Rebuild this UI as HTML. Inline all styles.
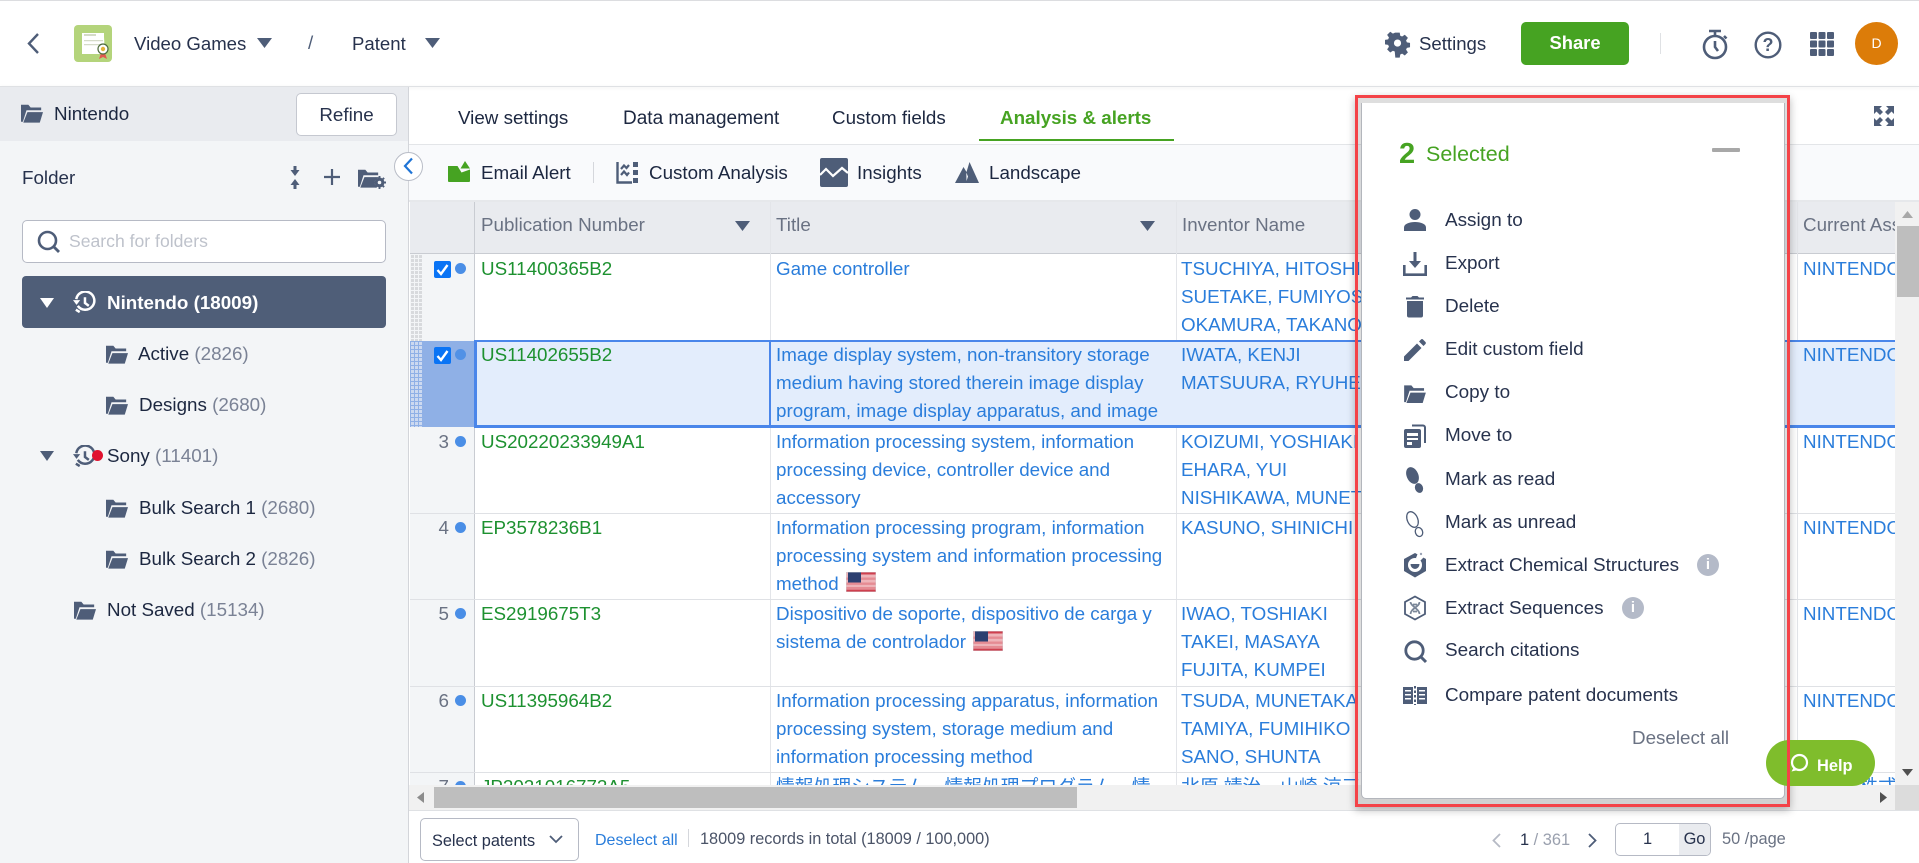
<!DOCTYPE html>
<html><head><meta charset="utf-8">
<style>
html,body{margin:0;padding:0;width:1919px;height:863px;overflow:hidden;background:#fff}
body{font-family:"Liberation Sans","Noto Sans CJK JP",sans-serif;color:#1c2740;font-size:18.8px;position:relative}
.a{position:absolute}
.t{position:absolute;white-space:nowrap;line-height:28px}
svg{position:absolute;overflow:visible}
.c{color:#7a8295}
.pub{color:#1d9130}
.lnk{color:#2a7ddb}
.num{color:#6a7283;width:20px;text-align:right;left:429px}
.dot{position:absolute;left:455px;width:11px;height:11px;border-radius:50%;background:#4a8ee6}
.cb{position:absolute;left:434px;width:17px;height:17px;border-radius:2px;background:#0a74f5}
.hl{position:absolute;height:1px;background:#dfe1e5;left:410px;width:1486px}
.vl{position:absolute;width:1px;top:253px;height:532px;background:#e3e5e9}
.grip{position:absolute;left:410px;width:12px;background:linear-gradient(var(--b) 1px,transparent 1px) 0 0/4px 4px,linear-gradient(90deg,var(--b) 1px,transparent 1px) 0 0/4px 4px,var(--d)}
.mi{position:absolute;left:1445px;white-space:nowrap;line-height:28px;color:#27324d;font-size:18.9px}
</style></head><body>
<svg width="0" height="0" style="position:absolute"><defs>
<symbol id="fo" viewBox="0 0 24 21"><path fill="#4e5d78" d="M0 1.5H8L10.5 4.5H22V7.5H6L2 20H0Z"/><path fill="#4e5d78" d="M7 9.5H24L20.5 21H2.5Z"/></symbol>
<symbol id="hi" viewBox="0 0 24 24"><path fill="none" stroke="currentColor" stroke-width="2.6" d="M5 15.5A9.5 9.5 0 1 0 3.4 8.5M12.5 6.5V12.5L16.5 15.5M3 19.5 7 22"/><path fill="currentColor" d="M0 9.5H7.5L3.7 14.5Z"/></symbol>
<symbol id="fl" viewBox="0 0 30 20"><rect width="30" height="20" fill="#eeb4b9"/><path fill="#e58b93" d="M0 5.500h30v2.400H0zM0 10.500h30v2.400H0zM0 15h30v2H0z"/><rect y="17.500" width="30" height="2.500" fill="#cf3f4e"/><rect x="14" y="0" width="16" height="2.500" fill="#cf3f4e"/><rect x="2" width="13" height="10.500" fill="#2c3f70"/><rect width="30" height="20" fill="none" stroke="#cfd1d6" stroke-width=".8"/></symbol>
</defs></svg>

<!-- top header -->
<div class="a" style="left:0;top:0;width:1919px;height:1px;background:#dcdde0"></div>
<div class="a" style="left:0;top:86px;width:1919px;height:1px;background:#dfe1e4;box-shadow:0 1px 3px rgba(0,0,0,.1)"></div>
<svg style="left:26px;top:32px" width="14" height="22"><path d="M12 2 3 11.5 12 21" fill="none" stroke="#4e5d78" stroke-width="2.4"/></svg>
<svg style="left:74px;top:25px" width="38" height="37" viewBox="0 0 38 37"><rect width="38" height="37" rx="4" fill="#b4d47b"/><path d="M8 8H30V12L31 29H8Z" fill="#fff"/><path d="M10 9H22V11H10ZM10 15H29V16.2H10ZM10 19H29V20.2H10Z" fill="#d5dbc8"/><path d="M25 34 27 28H31L33 34 29 32Z" fill="#e2584f"/><circle cx="29" cy="24" r="5" fill="#fff" stroke="#4d6b3c" stroke-width="1.2"/><circle cx="29" cy="24" r="2.2" fill="#e3b23b"/></svg>
<div class="t" style="left:134px;top:30px;font-size:18.6px;color:#27324d">Video Games</div>
<svg style="left:257px;top:38px" width="15" height="11"><path d="M0 0H15L7.500 10Z" fill="#4e5d78"/></svg>
<div class="t" style="left:308px;top:29px;color:#4e5d78">/</div>
<div class="t" style="left:352px;top:30px;font-size:18.6px;color:#27324d">Patent</div>
<svg style="left:425px;top:38px" width="15" height="11"><path d="M0 0H15L7.500 10Z" fill="#4e5d78"/></svg>

<svg style="left:1386px;top:32px" width="23" height="23" viewBox="0 0 24 24"><path fill="#4e5d78" fill-rule="evenodd" d="M9.6 0h4.8l.6 3.4 2 .9 2.900-2 3.400 3.400-2 2.900.9 2 3.400.6v4.800l-3.400.6-.9 2 2 2.900-3.400 3.400-2.900-2-2 .9-.6 3.400H9.600L9 20.600l-2-.9-2.900 2-3.400-3.400 2-2.900-.9-2L-1.600 12.800V8l3.400-.6.900-2-2-2.900 3.400-3.400 2.900 2 2-.9ZM12 7.500a3.900 3.900 0 1 0 0 7.800 3.900 3.900 0 0 0 0-7.800Z" transform="translate(0.500 0.600) scale(.96)"/></svg>
<div class="t" style="left:1419px;top:30px;font-size:18.6px;color:#27324d">Settings</div>
<div class="a" style="left:1521px;top:22px;width:108px;height:43px;border-radius:5px;background:#46a322;color:#fff;text-align:center;line-height:42px;font-size:18.4px;font-weight:bold">Share</div>
<div class="a" style="left:1660px;top:33px;width:1px;height:21px;background:#dfe1e4"></div>
<svg style="left:1701px;top:29px" width="28" height="31" viewBox="0 0 28 31"><circle cx="14" cy="18" r="11" fill="none" stroke="#4e5d78" stroke-width="2.6"/><path d="M8 2H20M14 2V7M23 7l2.500 2.500M14 12V18L17 22" fill="none" stroke="#4e5d78" stroke-width="2.600"/></svg>
<svg style="left:1754px;top:31px" width="28" height="28" viewBox="0 0 28 28"><circle cx="14" cy="14" r="12.300" fill="none" stroke="#4e5d78" stroke-width="2.400"/><text x="14" y="20" text-anchor="middle" font-size="18" font-weight="bold" fill="#4e5d78" font-family="Liberation Sans">?</text></svg>
<svg style="left:1810px;top:32px" width="24" height="24" viewBox="0 0 24 24"><g fill="#4e5d78"><rect width="7" height="7" rx="1"/><rect x="8.500" width="7" height="7" rx="1"/><rect x="17" width="7" height="7" rx="1"/><rect y="8.500" width="7" height="7" rx="1"/><rect x="8.500" y="8.500" width="7" height="7" rx="1"/><rect x="17" y="8.500" width="7" height="7" rx="1"/><rect y="17" width="7" height="7" rx="1"/><rect x="8.500" y="17" width="7" height="7" rx="1"/><rect x="17" y="17" width="7" height="7" rx="1"/></g></svg>
<div class="a" style="left:1855px;top:22px;width:43px;height:43px;border-radius:50%;background:#dc7c09;color:#fff;text-align:center;line-height:43px;font-size:14px">D</div>

<!-- sidebar -->
<div class="a" style="left:0;top:87px;width:408px;height:776px;background:#f3f5f7"></div>
<div class="a" style="left:0;top:87px;width:408px;height:54px;background:#e9ebef"></div>
<div class="a" style="left:408px;top:87px;width:1px;height:776px;background:#d3d5da"></div>
<svg style="left:21px;top:103px" width="22" height="20"><use href="#fo" width="22" height="20"/></svg>
<div class="t" style="left:54px;top:100px;color:#1c2740">Nintendo</div>
<div class="a" style="left:296px;top:93px;width:99px;height:41px;border:1px solid #c5c8d0;border-radius:5px;background:#fff;text-align:center;line-height:41px;color:#27324d">Refine</div>
<div class="t" style="left:22px;top:164px;color:#27324d">Folder</div>
<svg style="left:289px;top:165px" width="12" height="25"><path d="M4.500 1H7.500V5H10.500L6 11 1.500 5H4.500ZM6 14 10.500 20H7.500V24H4.500V20H1.500Z" fill="#4e5d78"/></svg>
<svg style="left:324px;top:169px" width="16" height="16"><path d="M8 0V16M0 8H16" stroke="#4e5d78" stroke-width="2.200"/></svg>
<svg style="left:358px;top:168px" width="22" height="20"><use href="#fo" width="22" height="20"/></svg>
<svg style="left:373px;top:176px" width="13" height="13" viewBox="0 0 24 24"><circle cx="12" cy="12" r="9" fill="#f3f5f7"/><circle cx="12" cy="12" r="6.500" fill="none" stroke="#4e5d78" stroke-width="5"/><path d="M12 0V24M0 12H24M3.500 3.500 20.500 20.500M20.500 3.500 3.500 20.500" stroke="#4e5d78" stroke-width="3.500"/><circle cx="12" cy="12" r="3.300" fill="#f3f5f7"/></svg>

<div class="a" style="left:22px;top:220px;width:362px;height:41px;border:1px solid #b6bac5;border-radius:5px;background:#fff"></div>
<svg style="left:37px;top:230px" width="23" height="23" viewBox="0 0 23 23"><circle cx="10.500" cy="10.500" r="8.500" fill="none" stroke="#4e5d78" stroke-width="2.600"/><path d="M16.500 16.500 22 22" stroke="#4e5d78" stroke-width="2.800"/></svg>
<div class="t" style="left:69px;top:227px;font-size:17.600px;color:#bec2cb">Search for folders</div>

<div class="a" style="left:22px;top:276px;width:364px;height:52px;border-radius:4px;background:#4f5e78"></div>
<svg style="left:40px;top:298px" width="14" height="10"><path d="M0 0H14L7 10Z" fill="#fff"/></svg>
<svg style="left:73px;top:291px;color:#fff" width="23" height="23"><use href="#hi" width="23" height="23"/></svg>
<div class="t" style="left:107px;top:289px;color:#fff;font-weight:bold">Nintendo (18009)</div>

<svg style="left:106px;top:344px" width="22" height="20"><use href="#fo" width="22" height="20"/></svg>
<div class="t" style="left:138px;top:340px">Active <span class="c">(2826)</span></div>
<svg style="left:106px;top:395px" width="22" height="20"><use href="#fo" width="22" height="20"/></svg>
<div class="t" style="left:139px;top:391px">Designs <span class="c">(2680)</span></div>
<svg style="left:40px;top:451px" width="14" height="10"><path d="M0 0H14L7 10Z" fill="#4e5d78"/></svg>
<svg style="left:73px;top:445px;color:#4e5d78" width="23" height="23"><use href="#hi" width="23" height="23"/></svg>
<div class="a" style="left:92px;top:450px;width:11px;height:11px;border-radius:50%;background:#e0122f"></div>
<div class="t" style="left:107px;top:442px">Sony <span class="c">(11401)</span></div>
<svg style="left:106px;top:498px" width="22" height="20"><use href="#fo" width="22" height="20"/></svg>
<div class="t" style="left:139px;top:494px">Bulk Search 1 <span class="c">(2680)</span></div>
<svg style="left:106px;top:549px" width="22" height="20"><use href="#fo" width="22" height="20"/></svg>
<div class="t" style="left:139px;top:545px">Bulk Search 2 <span class="c">(2826)</span></div>
<svg style="left:74px;top:600px" width="22" height="20"><use href="#fo" width="22" height="20"/></svg>
<div class="t" style="left:107px;top:596px">Not Saved <span class="c">(15134)</span></div>

<!-- tabs -->
<div class="a" style="left:409px;top:144px;width:1510px;height:1px;background:#e3e5e8"></div>
<div class="t" style="left:458px;top:104px;color:#1c2740">View settings</div>
<div class="t" style="left:623px;top:105px;color:#1c2740;font-size:19px">Data management</div>
<div class="t" style="left:832px;top:104px;color:#1c2740">Custom fields</div>
<div class="t" style="left:1000px;top:104px;color:#46a322;font-weight:bold">Analysis &amp; alerts</div>
<div class="a" style="left:979px;top:139px;width:195px;height:2px;background:#46a322"></div>
<svg style="left:1874px;top:106px" width="20" height="20" viewBox="0 0 20 20"><path fill="#4e5d78" d="M0 0H8L5.500 2.500 9 6 6 9 2.500 5.500 0 8ZM20 0V8L17.500 5.500 14 9 11 6 14.500 2.500 12 0ZM0 20V12L2.500 14.500 6 11 9 14 5.500 17.500 8 20ZM20 20H12L14.500 17.500 11 14 14 11 17.500 14.500 20 12Z"/></svg>

<!-- toolbar -->
<div class="a" style="left:409px;top:145px;width:1510px;height:55px;background:#f9fafc"></div>
<div class="a" style="left:409px;top:200px;width:1510px;height:2px;background:#e6e8eb"></div>
<svg style="left:448px;top:161px" width="23" height="23" viewBox="0 0 23 23"><path fill="#46a322" d="M0 5H9.500L13.500 11.500 22 8.500V20a1 1 0 0 1-1 1H1a1 1 0 0 1-1-1Z"/><path fill="#46a322" d="M17 0 22 7.500H12.500Z"/></svg>
<div class="t" style="left:481px;top:159px;color:#1c2740">Email Alert</div>
<div class="a" style="left:593px;top:162px;width:1px;height:21px;background:#d5d7dc"></div>
<svg style="left:616px;top:162px" width="22" height="22" viewBox="0 0 22 22"><path d="M1.500 0V20.500H16" fill="none" stroke="#4e5d78" stroke-width="2.400"/><path d="M5 7 8 3.500 10.500 6 13 3M5 13 8 9.500 11 13 13 10.500" fill="none" stroke="#4e5d78" stroke-width="2.200"/><path fill="#4e5d78" d="M17 0h5v5h-5zM17 8h5v5h-5zM17 16h5v5h-5z"/></svg>
<div class="t" style="left:649px;top:159px;color:#1c2740">Custom Analysis</div>
<svg style="left:820px;top:158px" width="28" height="29" viewBox="0 0 28 29"><rect width="28" height="29" rx="2" fill="#4e5d78"/><path d="M0 17 6 11 13 18 22 10 28 15" fill="none" stroke="#fff" stroke-width="2.200"/></svg>
<div class="t" style="left:857px;top:159px;color:#1c2740">Insights</div>
<svg style="left:955px;top:162px" width="24" height="21" viewBox="0 0 24 21"><path fill="#4e5d78" d="M0 21 8.500 5 11.500 10 14.500 0 24 21Z"/><path fill="#f9fafc" d="M11.300 10.500 13 14.500 11.500 19Z"/></svg>
<div class="t" style="left:989px;top:159px;color:#1c2740">Landscape</div>

<!-- table -->
<div class="a" style="left:409px;top:202px;width:1487px;height:583px;overflow:hidden;background:#fff"></div>
<div class="a" style="left:410px;top:202px;width:64px;height:583px;background:#f3f5f7"></div>
<div class="a" style="left:410px;top:202px;width:1486px;height:51px;background:#e9ebef"></div>
<div class="a" style="left:410px;top:253px;width:1486px;height:1px;background:#c9ccd2"></div>
<div class="a" style="left:474px;top:202px;width:1px;height:583px;background:#c9ccd2"></div>
<div class="vl" style="left:770px;top:202px;height:583px"></div>
<div class="vl" style="left:1176px;top:202px;height:583px"></div>
<div class="vl" style="left:1797px;top:202px;height:583px"></div>
<div class="hl" style="top:513px"></div><div class="hl" style="top:599px"></div><div class="hl" style="top:686px"></div><div class="hl" style="top:772px"></div>

<!-- selected row -->
<div class="a" style="left:475px;top:341px;width:1420px;height:86px;background:#e3edfc"></div>
<div class="a" style="left:410px;top:341px;width:64px;height:86px;background:#8fb0e6"></div>
<div class="a" style="left:475px;top:340px;width:1420px;height:2px;background:#4a86ea"></div>
<div class="a" style="left:475px;top:425px;width:1420px;height:3px;background:#4a86ea"></div>
<div class="a" style="left:474px;top:340px;width:3px;height:88px;background:#4a86ea"></div>
<div class="a" style="left:769px;top:340px;width:2px;height:88px;background:#4a86ea"></div>
<div class="grip" style="top:254px;height:87px;--b:#f3f5f7;--d:#d8dadd"></div>
<div class="grip" style="top:341px;height:86px;--b:#8fb0e6;--d:#ccd9f0"></div>

<div class="t" style="left:481px;top:211px;color:#6a7283">Publication Number</div>
<svg style="left:735px;top:221px" width="15" height="10"><path d="M0 0H15L7.500 10Z" fill="#4e5d78"/></svg>
<div class="t" style="left:776px;top:211px;color:#6a7283">Title</div>
<svg style="left:1140px;top:221px" width="15" height="10"><path d="M0 0H15L7.500 10Z" fill="#4e5d78"/></svg>
<div class="t" style="left:1182px;top:211px;color:#6a7283">Inventor Name</div>
<div class="a" style="left:1803px;top:202px;width:92px;height:51px;overflow:hidden"><div class="t" style="left:0;top:9px;color:#6a7283">Current Assignee</div></div>

<!-- row marks -->
<div class="cb" style="top:261px"></div><svg style="left:434px;top:261px" width="17" height="17"><path d="M3.500 9 7 13 13.500 4" fill="none" stroke="#fff" stroke-width="2.400"/></svg>
<div class="cb" style="top:347px"></div><svg style="left:434px;top:347px" width="17" height="17"><path d="M3.500 9 7 13 13.500 4" fill="none" stroke="#fff" stroke-width="2.400"/></svg>
<div class="dot" style="top:263px"></div><div class="dot" style="top:349px;opacity:.9"></div>
<div class="t num" style="top:428px">3</div><div class="dot" style="top:436px"></div>
<div class="t num" style="top:514px">4</div><div class="dot" style="top:522px"></div>
<div class="t num" style="top:600px">5</div><div class="dot" style="top:608px"></div>
<div class="t num" style="top:687px">6</div><div class="dot" style="top:695px"></div>

<!-- Rows -->
<div class="t pub" style="left:481px;top:255px">US11400365B2</div>
<div class="t lnk" style="left:776px;top:255px">Game controller</div>
<div class="t lnk" style="left:1181px;top:255px">TSUCHIYA, HITOSHI<br>SUETAKE, FUMIYOSHI<br>OKAMURA, TAKANORI</div>
<div class="t lnk" style="left:1803px;top:255px;width:92px;overflow:hidden">NINTENDO CO LTD</div>

<div class="t pub" style="left:481px;top:341px">US11402655B2</div>
<div class="t lnk" style="left:776px;top:341px">Image display system, non-transitory storage<br>medium having stored therein image display<br>program, image display apparatus, and image</div>
<div class="t lnk" style="left:1181px;top:341px">IWATA, KENJI<br>MATSUURA, RYUHEI</div>
<div class="t lnk" style="left:1803px;top:341px;width:92px;overflow:hidden">NINTENDO CO LTD</div>

<div class="t pub" style="left:481px;top:428px">US20220233949A1</div>
<div class="t lnk" style="left:776px;top:428px">Information processing system, information<br>processing device, controller device and<br>accessory</div>
<div class="t lnk" style="left:1181px;top:428px">KOIZUMI, YOSHIAKI<br>EHARA, YUI<br>NISHIKAWA, MUNETAKA</div>
<div class="t lnk" style="left:1803px;top:428px;width:92px;overflow:hidden">NINTENDO CO LTD</div>

<div class="t pub" style="left:481px;top:514px">EP3578236B1</div>
<div class="t lnk" style="left:776px;top:514px">Information processing program, information<br>processing system and information processing<br>method</div>
<svg style="left:846px;top:572px" width="30" height="20"><use href="#fl" width="30" height="20"/></svg>
<div class="t lnk" style="left:1181px;top:514px">KASUNO, SHINICHI</div>
<div class="t lnk" style="left:1803px;top:514px;width:92px;overflow:hidden">NINTENDO CO LTD</div>

<div class="t pub" style="left:481px;top:600px">ES2919675T3</div>
<div class="t lnk" style="left:776px;top:600px">Dispositivo de soporte, dispositivo de carga y<br>sistema de controlador</div>
<svg style="left:973px;top:631px" width="30" height="20"><use href="#fl" width="30" height="20"/></svg>
<div class="t lnk" style="left:1181px;top:600px">IWAO, TOSHIAKI<br>TAKEI, MASAYA<br>FUJITA, KUMPEI</div>
<div class="t lnk" style="left:1803px;top:600px;width:92px;overflow:hidden">NINTENDO CO LTD</div>

<div class="t pub" style="left:481px;top:687px">US11395964B2</div>
<div class="t lnk" style="left:776px;top:687px">Information processing apparatus, information<br>processing system, storage medium and<br>information processing method</div>
<div class="t lnk" style="left:1181px;top:687px">TSUDA, MUNETAKA<br>TAMIYA, FUMIHIKO<br>SANO, SHUNTA</div>
<div class="t lnk" style="left:1803px;top:687px;width:92px;overflow:hidden">NINTENDO CO LTD</div>

<div class="a" style="left:410px;top:773px;width:1486px;height:12px;overflow:hidden">
<div class="t num" style="top:0;left:19px">7</div><div class="dot" style="top:8px;left:45px"></div>
<div class="t pub" style="left:71px;top:0">JP2021016772A5</div>
<div class="t lnk" style="left:366px;top:0">情報処理システム、情報処理プログラム、情</div>
<div class="t lnk" style="left:771px;top:0">北原 靖治、山崎 涼三</div>
<div class="t lnk" style="left:1393px;top:0;width:92px;overflow:hidden">任天堂株式会社</div>
</div>

<!-- horizontal scroll -->
<div class="a" style="left:409px;top:785px;width:1510px;height:25px;background:#f1f1f1"></div>
<div class="a" style="left:409px;top:810px;width:1510px;height:1px;background:#dfe1e4"></div>
<div class="a" style="left:434px;top:787px;width:643px;height:21px;background:#bebebe"></div>
<svg style="left:417px;top:792px" width="7" height="11"><path d="M7 0V11L0 5.500Z" fill="#8c8c8c"/></svg>
<svg style="left:1880px;top:792px" width="7" height="11"><path d="M0 0V11L7 5.500Z" fill="#505050"/></svg>
<div class="a" style="left:1895px;top:785px;width:24px;height:25px;background:#dcdcdc"></div>

<!-- vertical scroll -->
<div class="a" style="left:1895px;top:202px;width:24px;height:583px;background:#f1f1f1"></div>
<div class="a" style="left:1897px;top:226px;width:22px;height:71px;background:#bebebe"></div>
<svg style="left:1902px;top:211px" width="11" height="7"><path d="M0 7H11L5.500 0Z" fill="#a8a8a8"/></svg>
<svg style="left:1902px;top:769px" width="11" height="7"><path d="M0 0H11L5.500 7Z" fill="#505050"/></svg>

<!-- footer -->
<div class="a" style="left:420px;top:818px;width:157px;height:41px;border:1px solid #b6bac5;border-radius:5px;background:#fff"></div>
<div class="t" style="left:432px;top:827px;font-size:16.300px;color:#27324d">Select patents</div>
<svg style="left:549px;top:835px" width="14" height="9"><path d="M1 1 7 7 13 1" fill="none" stroke="#4e5d78" stroke-width="1.800"/></svg>
<div class="t lnk" style="left:595px;top:827px;font-size:16px">Deselect all</div>
<div class="a" style="left:688px;top:829px;width:1px;height:18px;background:#d5d7dc"></div>
<div class="t" style="left:700px;top:825px;font-size:16.300px;color:#4b5468">18009 records in total (18009 / 100,000)</div>
<svg style="left:1492px;top:833px" width="9" height="15"><path d="M8 1 1.500 7.500 8 14" fill="none" stroke="#b6bac5" stroke-width="1.800"/></svg>
<div class="t" style="left:1520px;top:826px;font-size:16.400px;color:#27324d">1 <span style="color:#9aa0ae">/ 361</span></div>
<svg style="left:1588px;top:833px" width="9" height="15"><path d="M1 1 7.500 7.500 1 14" fill="none" stroke="#4e5d78" stroke-width="1.800"/></svg>
<div class="a" style="left:1615px;top:823px;width:94px;height:31px;border:1px solid #b6bac5;border-radius:5px;background:#fff;overflow:hidden"><div class="a" style="left:63px;top:0;width:31px;height:31px;background:#e9ebef;text-align:center;line-height:30px;font-size:16.400px;color:#27324d">Go</div><div class="a" style="left:0;top:0;width:63px;text-align:center;line-height:31px;font-size:16.400px;color:#27324d">1</div></div>
<div class="t" style="left:1722px;top:825px;font-size:16.400px;color:#6a7283">50 /page</div>

<!-- panel -->
<div class="a" style="left:1355px;top:95px;width:435px;height:712px;box-sizing:border-box;box-shadow:0 3px 8px rgba(0,0,0,.28)"></div>
<div class="a" style="left:1358px;top:98px;width:429px;height:706px;background:rgba(0,0,0,.13)"></div>
<div class="a" style="left:1361px;top:103px;width:422px;height:695px;background:#fff;border:1px solid #b3b6bc;border-top:0;border-radius:0 0 5px 5px"></div>

<!-- help -->
<div class="a" style="left:1766px;top:740px;width:109px;height:46px;border-radius:23px;background:#7fbd2c"></div>
<svg style="left:1790px;top:754px" width="18" height="18" viewBox="0 0 18 18"><circle cx="9.500" cy="8.500" r="7.500" fill="none" stroke="#fff" stroke-width="2.200"/><path d="M4 13 1.500 17.500 8 16" fill="#fff"/></svg>
<div class="t" style="left:1817px;top:752px;color:#fff;font-weight:bold;font-size:16.400px">Help</div>

<div class="a" style="left:1355px;top:95px;width:429px;height:706px;border:3px solid #f44348"></div>

<div class="t" style="left:1399px;top:137px;font-size:29px;font-weight:bold;color:#46a322;line-height:34px">2</div>
<div class="t" style="left:1426px;top:140px;font-size:21.500px;color:#46a322">Selected</div>
<div class="a" style="left:1712px;top:148px;width:28px;height:4px;border-radius:1px;background:#a8a8a8"></div>

<svg style="left:1404px;top:209px" width="22" height="22" viewBox="0 0 22 22"><circle cx="11" cy="5.500" r="5.500" fill="#4e5d78"/><path fill="#4e5d78" d="M0 22V18.500C0 15 5 13 11 13S22 15 22 18.500V22Z"/></svg>
<div class="mi" style="top:207px">Assign to</div>
<svg style="left:1403px;top:252px" width="24" height="24" viewBox="0 0 24 24"><path fill="none" stroke="#4e5d78" stroke-width="2.600" d="M1.300 13V22.700H22.700V13"/><path fill="#4e5d78" d="M10.500 0H13.500V9H18L12 16 6 9H10.500Z"/></svg>
<div class="mi" style="top:250px">Export</div>
<svg style="left:1406px;top:296px" width="18" height="22" viewBox="0 0 18 22"><path fill="#4e5d78" d="M0 1.500H5L6.500 0H11.500L13 1.500H18V3.500H0ZM1 5H17V19.500a2 2 0 0 1-2 2H3a2 2 0 0 1-2-2Z"/></svg>
<div class="mi" style="top:293px">Delete</div>
<svg style="left:1404px;top:339px" width="22" height="22" viewBox="0 0 22 22"><path fill="#4e5d78" d="M0 17.500 13 4.500 17.500 9 4.500 22H0ZM15 2.500 17 .5a1.500 1.500 0 0 1 2 0L21.500 3a1.500 1.500 0 0 1 0 2L19.500 7Z"/></svg>
<div class="mi" style="top:336px">Edit custom field</div>
<svg style="left:1404px;top:384px" width="22" height="19"><use href="#fo" width="22" height="19"/></svg>
<div class="mi" style="top:379px">Copy to</div>
<svg style="left:1404px;top:424px" width="22" height="25" viewBox="0 0 22 25"><path fill="none" stroke="#4e5d78" stroke-width="2" d="M8 1.500H19a2 2 0 0 1 2 2V19"/><path fill-rule="evenodd" fill="#4e5d78" d="M2 5H15a2 2 0 0 1 2 2V22a2 2 0 0 1-2 2H2a2 2 0 0 1-2-2V7A2 2 0 0 1 2 5ZM3 9V12H14V9ZM3 14V16H14V14ZM3 18V21H8V18Z"/></svg>
<div class="mi" style="top:422px">Move to</div>
<svg style="left:1405px;top:467px" width="20" height="26" viewBox="0 0 20 26"><ellipse cx="7.500" cy="8.500" rx="5.800" ry="8.800" transform="rotate(-24 7.500 8.500)" fill="#4e5d78"/><ellipse cx="14" cy="21" rx="4" ry="5" transform="rotate(-20 14 21)" fill="#4e5d78"/></svg>
<div class="mi" style="top:466px">Mark as read</div>
<svg style="left:1405px;top:511px" width="20" height="26" viewBox="0 0 20 26"><ellipse cx="7.500" cy="8.500" rx="5.200" ry="8.200" transform="rotate(-24 7.500 8.500)" fill="none" stroke="#4e5d78" stroke-width="1.300"/><ellipse cx="14" cy="21" rx="3.600" ry="4.600" transform="rotate(-20 14 21)" fill="none" stroke="#4e5d78" stroke-width="1.300"/></svg>
<div class="mi" style="top:509px">Mark as unread</div>
<svg style="left:1404px;top:552px" width="22" height="26" viewBox="0 0 22 26"><path fill="#4e5d78" d="M11 1 22 7V19L11 25.500 0 19V7Z"/><circle cx="11" cy="13" r="7" fill="#fff"/><path d="M6.500 12A4.500 5 0 0 0 15.500 12Z" fill="#4e5d78"/><path d="M14 1 20 5 16 9 12 6Z" fill="#fff"/><circle cx="17" cy="2" r="1.200" fill="#9aa3b5"/></svg>
<div class="mi" style="top:552px">Extract Chemical Structures</div>
<div class="a" style="left:1697px;top:554px;width:22px;height:22px;border-radius:50%;background:#b4bac8;color:#fff;text-align:center;font-weight:bold;font-size:15px;line-height:22px">i</div>
<svg style="left:1404px;top:595px" width="22" height="26" viewBox="0 0 22 26"><path fill="none" stroke="#4e5d78" stroke-width="1.800" d="M11 1.500 21 7V19L11 24.500 1 19V7Z"/><path fill="none" stroke="#7a8698" stroke-width="1.800" d="M15.500 7C15.500 12 7 13 6.500 19M6.500 7C6.500 11 15.500 14 15.500 19M9 9.500 13 9.500M9 16.500 13 16.500"/></svg>
<div class="mi" style="top:595px">Extract Sequences</div>
<div class="a" style="left:1622px;top:597px;width:22px;height:22px;border-radius:50%;background:#b4bac8;color:#fff;text-align:center;font-weight:bold;font-size:15px;line-height:22px">i</div>
<svg style="left:1404px;top:640px" width="23" height="23" viewBox="0 0 23 23"><circle cx="10.500" cy="10.500" r="8.700" fill="none" stroke="#4e5d78" stroke-width="2.800"/><path d="M16.500 16.500 22 22" stroke="#4e5d78" stroke-width="3"/></svg>
<div class="mi" style="top:637px">Search citations</div>
<svg style="left:1403px;top:686px" width="24" height="19" viewBox="0 0 24 19"><path fill="#4e5d78" fill-rule="evenodd" d="M0 1H10V18H0ZM2 4V5.500H8V4ZM2 8V9.500H8V8ZM2 12V13.500H8V12ZM14 1H24V18H14ZM16 4V5.500H22V4ZM16 8V9.500H22V8ZM16 12V13.500H22V12Z"/><path d="M12 0V19" stroke="#4e5d78" stroke-width="2" stroke-dasharray="2.500 2"/></svg>
<div class="mi" style="top:682px">Compare patent documents</div>
<div class="t" style="left:1632px;top:724px;color:#6a7283">Deselect all</div>

<!-- collapse toggle -->
<div class="a" style="left:394px;top:152px;width:27px;height:27px;border:1px solid #b9bdc7;border-radius:50%;background:#fff"></div>
<svg style="left:403px;top:157px" width="11" height="18"><path d="M9 1.500 2 9 9 16.500" fill="none" stroke="#1f74d6" stroke-width="2.200"/></svg>
</body></html>
